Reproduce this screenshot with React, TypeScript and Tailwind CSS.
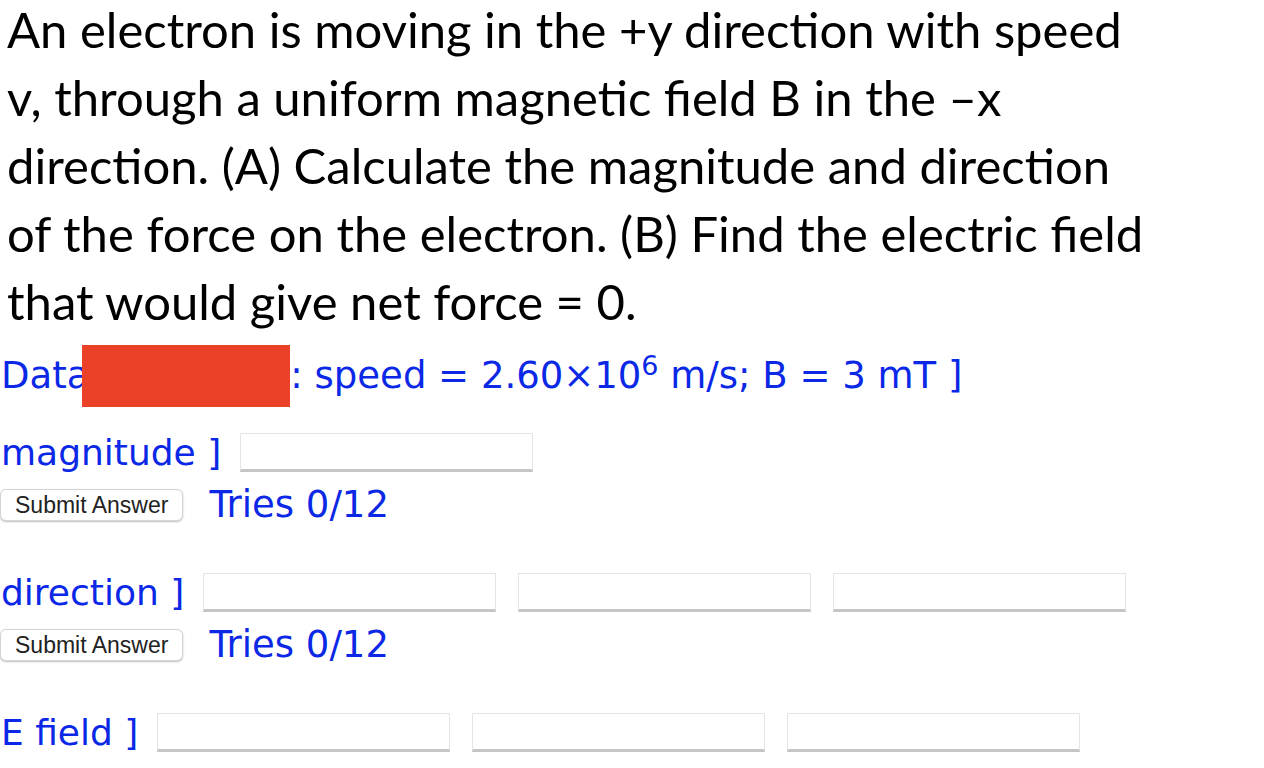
const blue = 'text-[#0a28e6]';

function Field() {
  return (
    <input
      type="text"
      className="h-[39px] w-[293px] border border-[#e4e4e4] border-b-[3px] border-b-[#c6c6c6] bg-white outline-none"
    />
  );
}

function SubmitRow() {
  return (
    <div className="flex h-[40px] items-center gap-[26px]">
      <button
        className="h-[32px] rounded-[6px] border border-[#d4d4d4] bg-white px-[14px] text-[23px] leading-none text-[#222] shadow-[0_1px_2px_rgba(0,0,0,0.25)]"
        style={{ fontFamily: '"Liberation Sans", Arial, sans-serif' }}
      >
        Submit Answer
      </button>
      <span className={`${blue} text-[37px] leading-[40px]`}>Tries 0/12</span>
    </div>
  );
}

function AnswerRow({ label, fields }: { label: string; fields: number }) {
  return (
    <div className="flex h-[39px] items-center gap-[19px]">
      <span className={`${blue} pl-[1px] text-[36px] leading-[40px]`}>{label}</span>
      <div className="flex gap-[22px]">
        {Array.from({ length: fields }).map((_, i) => (
          <Field key={i} />
        ))}
      </div>
    </div>
  );
}

export default function App() {
  return (
    <div className="h-[768px] w-[1264px] overflow-hidden bg-white">
      <p
        className="-mt-[5px] pl-[7px] text-[49px] leading-[68px] text-black"
        style={{ fontFamily: 'Lato, "Noto Sans", sans-serif' }}
      >
        An electron is moving in the +y direction with speed
        <br />
        v, through a uniform magnetic field B in the –x
        <br />
        direction. (A) Calculate the magnitude and direction
        <br />
        of the force on the electron. (B) Find the electric field
        <br />
        that would give net force = 0.
      </p>

      <div style={{ fontFamily: '"DejaVu Sans", Verdana, sans-serif' }}>
        <div className={`mt-[10px] flex h-[62px] items-center ${blue} text-[37px] leading-[40px]`}>
          <span className="pl-[1px]">Data</span>
          <span className="-ml-[7px] h-[62px] w-[208px] bg-[#eb4128]" />
          <span>
            : speed = 2.60×10<sup className="text-[27px]">6</sup> m/s; B = 3 mT ]
          </span>
        </div>

        <div className="mt-[26px]">
          <AnswerRow label="magnitude ]" fields={1} />
        </div>
        <div className="mt-[13px]">
          <SubmitRow />
        </div>

        <div className="mt-[48px]">
          <AnswerRow label="direction ]" fields={3} />
        </div>
        <div className="mt-[13px]">
          <SubmitRow />
        </div>

        <div className="mt-[48px]">
          <AnswerRow label="E field ]" fields={3} />
        </div>
        <div className="mt-[13px]">
          <SubmitRow />
        </div>
      </div>
    </div>
  );
}
